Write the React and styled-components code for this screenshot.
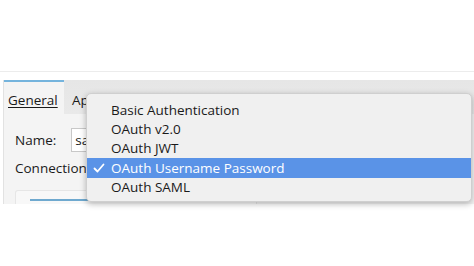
import React from "react";
import styled, { createGlobalStyle } from "styled-components";

const Global = createGlobalStyle`
  html, body { margin: 0; padding: 0; background: #fff; }
  body { font-family: "Open Sans", "Liberation Sans", Arial, sans-serif; width: 474px; height: 266px; overflow: hidden; }
`;

const Page = styled.div`
  position: relative;
  width: 474px;
  height: 266px;
  padding-top: 71px;
  box-sizing: border-box;
`;

const TopRule = styled.div`
  height: 1px;
  background: #ececec;
  margin-bottom: 8px;
`;

const Window = styled.div`
  margin-left: 3px;
  border-left: 1px solid #e2e2e2;
  height: 124px;
  display: flex;
  flex-direction: column;
`;

const TabBar = styled.div`
  display: flex;
  height: 34px;
  background: linear-gradient(#e6e6e6, #e9e9e9);
`;

const Tab = styled.div`
  padding: 9px 0 0 ${(p) => p.$pl}px;
  font-size: 13.5px;
  color: #1a1a1a;
  border-top: 2px solid ${(p) => (p.$active ? "#75b4dd" : "transparent")};
  background: ${(p) => (p.$active ? "#f4f4f4" : "transparent")};
  width: ${(p) => p.$w}px;
  box-sizing: border-box;
  span { text-decoration: ${(p) => (p.$active ? "underline" : "none")}; text-underline-offset: 2px; }
`;

const Body = styled.div`
  flex: 1;
  background: #f4f4f4;
  padding: 14px 0 0 11px;
  display: flex;
  flex-direction: column;
  gap: 4px;
`;

const Row = styled.div`
  display: flex;
  align-items: center;
  height: 24px;
  gap: 15px;
  font-size: 13.5px;
  color: #1a1a1a;
`;

const Input = styled.div`
  height: 22px;
  width: 60px;
  border: 1px solid #c8c8c8;
  background: #fff;
  font-size: 13.5px;
  line-height: 22px;
  padding-left: 3px;
`;

const SubPanel = styled.div`
  margin: 6px 0 0 0;
  width: 240px;
  flex: 1;
  background: #f8f8f8;
  border: 1px solid #e6e6e6;
  border-bottom: none;
  border-radius: 3px 3px 0 0;
  position: relative;
`;

const SubLine = styled.div`
  position: absolute;
  left: 14px;
  top: 8px;
  width: 160px;
  height: 2px;
  background: #6fa9cf;
`;

const Menu = styled.div`
  position: absolute;
  left: 86px;
  top: 93px;
  width: 386px;
  padding: 6px 0 4px;
  background: #f0f0f0;
  border-radius: 5px;
  border: 1px solid #cfcfcf;
  box-shadow: 0 2px 6px rgba(0, 0, 0, 0.28);
  box-sizing: border-box;
`;

const Item = styled.div`
  display: flex;
  align-items: center;
  height: 19.4px;
  font-family: "Open Sans", "Liberation Sans", sans-serif;
  font-size: 13.5px;
  color: ${(p) => (p.$sel ? "#fff" : "#1a1a1a")};
  background: ${(p) => (p.$sel ? "#5a93e7" : "transparent")};
`;

const Check = styled.span`
  width: 24px;
  padding-left: 6px;
  box-sizing: border-box;
  display: flex;
`;

const items = [
  "Basic Authentication",
  "OAuth v2.0",
  "OAuth JWT",
  "OAuth Username Password",
  "OAuth SAML",
];

export default function App() {
  return (
    <Page>
      <Global />
      <TopRule />
      <Window>
        <TabBar>
          <Tab $active $w={60} $pl={4}>
            <span>General</span>
          </Tab>
          <Tab $w={60} $pl={8}>Ap</Tab>
        </TabBar>
        <Body>
          <Row>
            <span>Name:</span>
            <Input>sa</Input>
          </Row>
          <Row>
            <span>Connection</span>
          </Row>
          <SubPanel>
            <SubLine />
          </SubPanel>
        </Body>
      </Window>
      <Menu>
        {items.map((t, i) => (
          <Item key={t} $sel={i === 3}>
            <Check>
              {i === 3 && (
                <svg width="12" height="12" viewBox="0 0 12 12">
                  <path d="M1.5 6.5 L4.5 9.5 L10.5 2.5" fill="none" stroke="#fff" strokeWidth="1.8" strokeLinecap="round" strokeLinejoin="round" />
                </svg>
              )}
            </Check>
            {t}
          </Item>
        ))}
      </Menu>
    </Page>
  );
}
